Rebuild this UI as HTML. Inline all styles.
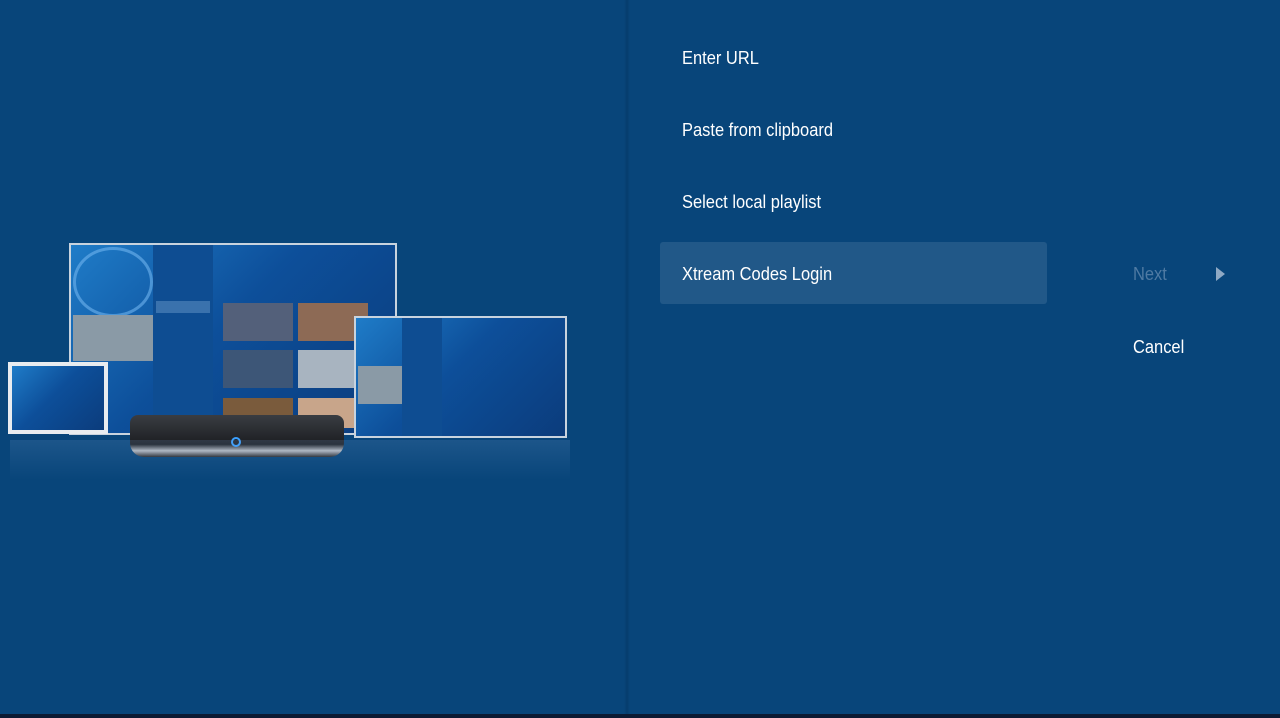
<!DOCTYPE html>
<html><head><meta charset="utf-8"><style>
*{margin:0;padding:0;box-sizing:border-box}
body{width:1280px;height:718px;background:#08457a;overflow:hidden;position:relative;font-family:"Liberation Sans",sans-serif}
.left{position:absolute;left:0;top:0;width:627px;height:714px;background:#08457a}
.div{position:absolute;left:624px;top:0;width:6px;height:714px;background:linear-gradient(90deg,#08457a,#063d6d,#08457a)}
.bottom{position:absolute;left:0;top:714px;width:1280px;height:4px;background:#0c1a33}
.item{position:absolute;left:682px;color:#fff;font-size:18.5px;transform:scaleX(0.89);transform-origin:0 0;white-space:nowrap}
.sel{position:absolute;left:660px;top:242px;width:387px;height:62px;background:#215888;border-radius:3px}
.tv{position:absolute;border:2px solid #c8d3de;background:linear-gradient(135deg,#1f7cc8 0%,#0d4f9a 45%,#0b3c7c 100%)}
</style></head><body>
<div class="left">
  <div class="tv" style="left:69px;top:243px;width:328px;height:192px">
    <div style="position:absolute;left:2px;top:2px;width:80px;height:70px;border-radius:50%;border:3px solid #6fb4ef;opacity:.6"></div>
    <div style="position:absolute;left:2px;top:70px;width:80px;height:46px;background:#8a9aa6"></div>
    <div style="position:absolute;left:82px;top:0;width:60px;height:190px;background:#0e4d92"></div>
    <div style="position:absolute;left:85px;top:56px;width:54px;height:12px;background:#3a72ad"></div>
    <div style="position:absolute;left:152px;top:58px;width:70px;height:38px;background:#53607a"></div>
    <div style="position:absolute;left:227px;top:58px;width:70px;height:38px;background:#8d6a55"></div>
    <div style="position:absolute;left:152px;top:105px;width:70px;height:38px;background:#3d5677"></div>
    <div style="position:absolute;left:227px;top:105px;width:70px;height:38px;background:#a8b4c0"></div>
    <div style="position:absolute;left:152px;top:153px;width:70px;height:30px;background:#7a5b3c"></div>
    <div style="position:absolute;left:227px;top:153px;width:70px;height:30px;background:#c8a58a"></div>
  </div>
  <div class="tv" style="left:8px;top:362px;width:100px;height:72px;border-width:4px;border-color:#e8ecf0"></div>
  <div class="tv" style="left:354px;top:316px;width:213px;height:122px">
    <div style="position:absolute;left:2px;top:48px;width:44px;height:38px;background:#8a9aa6"></div>
    <div style="position:absolute;left:46px;top:0;width:40px;height:118px;background:#0e4d92"></div>
  </div>
  <div style="position:absolute;left:130px;top:415px;width:214px;height:42px;border-radius:8px 8px 14px 14px;background:linear-gradient(#3a3d42,#1c1e22 70%,#b8bcc2 85%,#2a2c30)"></div>
  <div style="position:absolute;left:231px;top:437px;width:10px;height:10px;border-radius:50%;border:2px solid #3aa0ff"></div>
  <div style="position:absolute;left:10px;top:440px;width:560px;height:40px;background:linear-gradient(rgba(120,160,210,.18),rgba(8,69,122,0))"></div>
</div>
<div class="div"></div>
<div class="item" style="top:47px">Enter URL</div>
<div class="item" style="top:119px">Paste from clipboard</div>
<div class="item" style="top:191px">Select local playlist</div>
<div class="sel"></div>
<div class="item" style="top:263px">Xtream Codes Login</div>
<div class="item" style="left:1133px;top:263px;color:#4f7aa3">Next</div>
<div style="position:absolute;left:1216px;top:267px;width:0;height:0;border-top:7px solid transparent;border-bottom:7px solid transparent;border-left:9px solid #8fa9c4"></div>
<div class="item" style="left:1133px;top:336px">Cancel</div>
<div class="bottom"></div>
</body></html>
